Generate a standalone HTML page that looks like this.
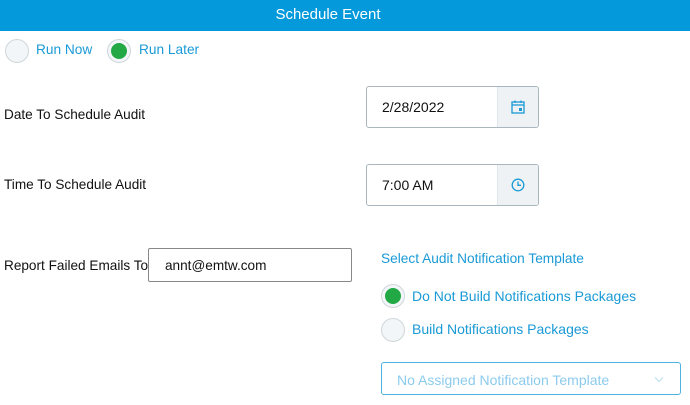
<!DOCTYPE html>
<html><head><style>
body{margin:0;width:690px;height:405px;background:#fff;font-family:"Liberation Sans",sans-serif;position:relative;overflow:hidden}
.a{position:absolute}
.hdr{left:0;top:0;width:656px;height:31px;color:#fff;font-size:15px;text-align:center;line-height:29px;}
.rad{width:22px;height:22px;border:1px solid #cfd6da;border-radius:50%;background:#f3f6f8;box-sizing:content-box}
.rad.on::after{content:"";position:absolute;left:3px;top:3px;width:16px;height:16px;border-radius:50%;background:#22a845}
.blue{color:#1a9ad6;font-size:13.7px}
.lbl{font-size:13.6px;color:#111}
.box{border:1px solid #a9b6bd;border-radius:3px;background:#fff;box-sizing:border-box}
.ic{position:absolute;right:0;top:0;bottom:0;width:40px;background:#eef2f4;border-left:1px solid #e0e6e9;border-radius:0 3px 3px 0}
</style></head><body>
<div class="a" style="left:0;top:0;width:690px;height:31px;background:#0399db"></div>
<div class="a hdr">Schedule Event</div>
<div class="a rad" style="left:5px;top:39px"></div>
<div class="a blue" style="left:36px;top:42px">Run Now</div>
<div class="a rad on" style="left:107px;top:39px"></div>
<div class="a blue" style="left:139px;top:42px">Run Later</div>

<div class="a lbl" style="left:4px;top:107px">Date To Schedule Audit</div>
<div class="a box" style="left:366px;top:86px;width:173px;height:42px">
<div class="a" style="left:15px;top:12px;font-size:14px;color:#111">2/28/2022</div>
<div class="ic"><svg class="a" style="left:13px;top:13px" width="14" height="14" viewBox="0 0 14 14"><rect x="1" y="2" width="12" height="11" fill="none" stroke="#1a9ad6" stroke-width="1.3"/><line x1="1" y1="5" x2="13" y2="5" stroke="#1a9ad6" stroke-width="1.3"/><line x1="4" y1="0.5" x2="4" y2="3" stroke="#1a9ad6" stroke-width="1.3"/><line x1="10" y1="0.5" x2="10" y2="3" stroke="#1a9ad6" stroke-width="1.3"/><rect x="8" y="8" width="3" height="3" fill="#1a9ad6"/></svg></div>
</div>

<div class="a lbl" style="left:4px;top:177px">Time To Schedule Audit</div>
<div class="a box" style="left:366px;top:164px;width:173px;height:42px">
<div class="a" style="left:15px;top:12px;font-size:14px;color:#111">7:00 AM</div>
<div class="ic"><svg class="a" style="left:13px;top:13px" width="14" height="14" viewBox="0 0 14 14"><circle cx="7" cy="7" r="5.8" fill="none" stroke="#1a9ad6" stroke-width="1.3"/><path d="M7 3.5V7.3H10" fill="none" stroke="#1a9ad6" stroke-width="1.3"/></svg></div>
</div>

<div class="a lbl" style="left:4px;top:258px">Report Failed Emails To</div>
<div class="a box" style="left:148px;top:248px;width:204px;height:34px;border-color:#888;border-radius:2px">
<div class="a" style="left:16px;top:9px;font-size:13.6px;color:#111">annt@emtw.com</div></div>

<div class="a blue" style="left:381px;top:251px">Select Audit Notification Template</div>
<div class="a rad on" style="left:381px;top:284px"></div>
<div class="a blue" style="left:412px;top:288px;font-size:14px">Do Not Build Notifications Packages</div>
<div class="a rad" style="left:381px;top:318px"></div>
<div class="a blue" style="left:412px;top:321px;font-size:14px">Build Notifications Packages</div>

<div class="a box" style="left:381px;top:362px;width:300px;height:33px;border-color:#4fb1e2">
<div class="a" style="left:15px;top:9px;font-size:14px;color:#8ccbed">No Assigned Notification Template</div>
<svg class="a" style="left:272px;top:13px" width="10" height="7" viewBox="0 0 10 7"><path d="M1 1.5L5 5.5L9 1.5" fill="none" stroke="#b8dcef" stroke-width="1"/></svg>
</div>
</body></html>
